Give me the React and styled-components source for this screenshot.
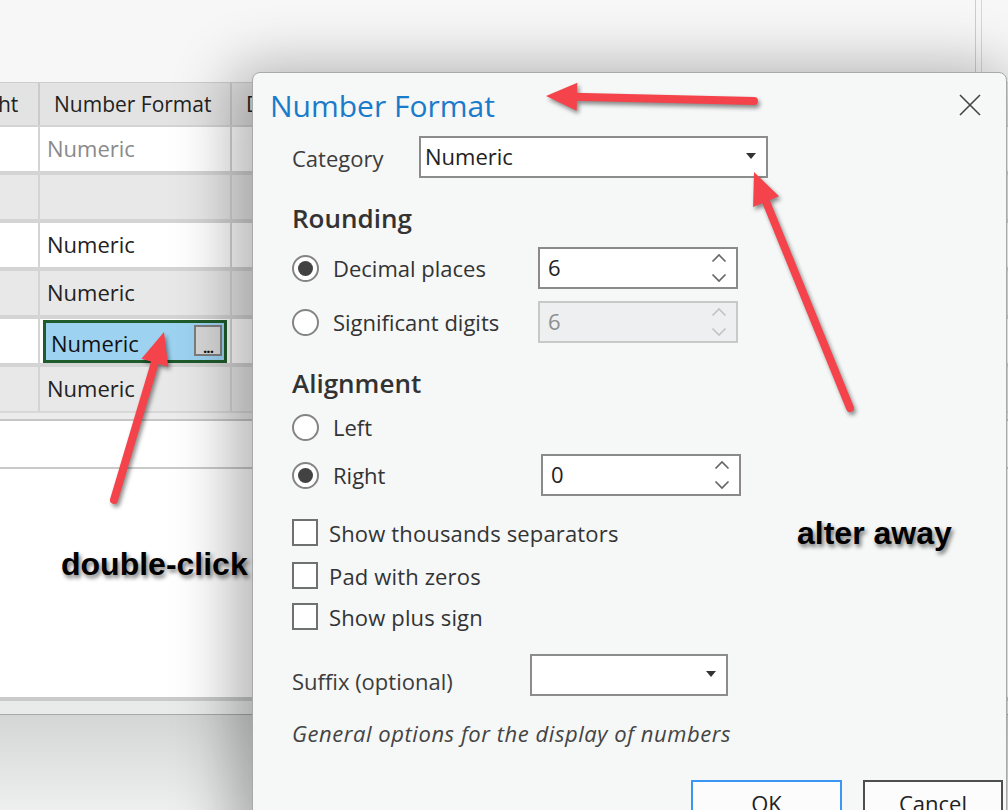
import React from "react";
import styled, { createGlobalStyle } from "styled-components";

const GlobalStyle = createGlobalStyle`
  html, body {
    margin: 0;
    padding: 0;
  }
  body {
    font-family: "Open Sans", "Noto Sans", sans-serif;
    background: #f7f7f7;
  }
`;

const Screen = styled.div`
  position: relative;
  width: 1008px;
  height: 810px;
  overflow: hidden;
  background: #f7f7f7;
  display: flex;
  flex-direction: column;
`;

/* ---------- background application ---------- */

const TopStrip = styled.div`
  flex: 0 0 82px;
  display: flex;
`;

const TopFill = styled.div`
  flex: 0 0 975px;
`;

const ScrollEdge = styled.div`
  width: 5px;
  border-left: 1px solid #cdcdcd;
  border-right: 1px solid #d6d6d6;
`;

const Table = styled.div`
  margin-left: -60px;
  background: #d4d4d4;
  display: flex;
  flex-direction: column;
`;

const HeaderRow = styled.div`
  display: grid;
  grid-template-columns: 98px 190px 1fr;
  column-gap: 2px;
  height: 43px;
  box-sizing: border-box;
  border-top: 1px solid #cdcdcd;
  background: #cbcbcb;
`;

const HeaderCell = styled.div`
  display: flex;
  align-items: center;
  padding-left: 14px;
  background: #e3e3e3;
  font-size: 21px;
  color: #222;
  white-space: nowrap;
  overflow: hidden;
`;

const TableBody = styled.div`
  display: flex;
  flex-direction: column;
  gap: 4px;
  padding-top: 2px;
`;

const Row = styled.div`
  display: grid;
  grid-template-columns: 98px 190px 1fr;
  column-gap: 2px;
  height: 44px;
`;

const Cell = styled.div`
  display: flex;
  align-items: center;
  padding: 0 0 3px 7px;
  background: ${(p) => (p.$alt ? "#e8e8e8" : "#ffffff")};
  font-size: 22px;
  color: ${(p) => (p.$muted ? "#8a8a8a" : "#222")};
  white-space: nowrap;
  overflow: hidden;
`;

const EditCell = styled.div`
  background: #ffffff;
  padding: 1px 3px 0 3px;
  display: flex;
`;

const Editor = styled.div`
  flex: 1;
  display: flex;
  align-items: flex-end;
  justify-content: space-between;
  border: 3px solid #1f5b2b;
  background: #9dd3f1;
  padding: 0 2px 2px 5px;
  font-size: 22px;
  line-height: 30px;
  color: #111;
`;

const EllipsisButton = styled.div`
  width: 28px;
  height: 31px;
  box-sizing: border-box;
  border: 2px solid #7e7e7e;
  background: #d8d8d8;
  display: flex;
  align-items: flex-end;
  justify-content: center;
  font-size: 15px;
  font-weight: 700;
  line-height: 14px;
  letter-spacing: -1px;
  color: #111;
  margin-bottom: 2px;
`;

const TableEnd = styled.div`
  height: 6px;
  background: #ececec;
  border-top: 2px solid #d8d8d8;
  border-bottom: 2px solid #c6c6c6;
`;

const WhitePanel = styled.div`
  flex: 0 0 ${(p) => p.$h}px;
  background: #ffffff;
  border-bottom: 2px solid #cacaca;
`;

const StatusBar = styled.div`
  flex: 0 0 13px;
  background: #e9eaea;
  border-top: 2px solid #c9c9c9;
  border-bottom: 1px solid #a8a8a8;
`;

const BottomShade = styled.div`
  flex: 1;
  background: linear-gradient(#d4d5d5, #eef0f0);
`;

/* ---------- dialog ---------- */

const Dialog = styled.div`
  position: absolute;
  left: 252px;
  top: 72px;
  width: 755px;
  height: 780px;
  box-sizing: border-box;
  background: #f6f7f7;
  border: 1px solid #a9a9a9;
  border-radius: 8px;
  box-shadow: -10px 6px 60px 10px rgba(0, 0, 0, 0.3);
  display: flex;
  flex-direction: column;
`;

const DialogHeader = styled.div`
  flex: 0 0 63px;
  box-sizing: border-box;
  padding: 13px 25px 0 17px;
  display: flex;
  justify-content: space-between;
  align-items: flex-start;
`;

const Title = styled.div`
  font-size: 30px;
  line-height: 40px;
  font-weight: 400;
  color: #1a7bca;
`;

const CloseButton = styled.div`
  margin-top: 8px;
  width: 22px;
  height: 22px;
  display: flex;
`;

const DialogBody = styled.div`
  padding-left: 39px;
  display: flex;
  flex-direction: column;
  color: #333;
  font-size: 22px;
`;

const FieldRow = styled.div`
  display: flex;
  align-items: center;
  height: 42px;
  margin-top: ${(p) => p.$mt || 0}px;
`;

const FieldLabel = styled.div`
  width: ${(p) => p.$w}px;
  flex: 0 0 auto;
  padding-top: ${(p) => p.$dy || 0}px;
  color: #3c3c3c;
  white-space: nowrap;
`;

const Select = styled.div`
  width: ${(p) => p.$w}px;
  height: 42px;
  box-sizing: border-box;
  border: 2px solid #8c8c8c;
  background: #ffffff;
  display: flex;
  align-items: center;
  justify-content: space-between;
  padding: 0 10px 3px 4px;
  color: #222;
`;

const SectionTitle = styled.div`
  margin-top: ${(p) => p.$mt}px;
  font-size: 26px;
  line-height: 32px;
  font-weight: 600;
  color: #333;
`;

const Option = styled.div`
  width: ${(p) => p.$w}px;
  flex: 0 0 auto;
  display: flex;
  align-items: center;
  gap: 14px;
`;

const Radio = styled.div`
  width: 27px;
  height: 27px;
  box-sizing: border-box;
  border-radius: 50%;
  border: 2px solid #848484;
  background: #ffffff;
  display: flex;
  align-items: center;
  justify-content: center;
  &::after {
    content: "";
    width: 15px;
    height: 15px;
    border-radius: 50%;
    background: ${(p) => (p.$checked ? "#424242" : "transparent")};
  }
`;

const Checkbox = styled.div`
  width: 26px;
  height: 27px;
  box-sizing: border-box;
  border: 2px solid #707070;
  background: #ffffff;
`;

const CheckRow = styled.div`
  display: flex;
  align-items: center;
  gap: 11px;
  height: 27px;
  margin-top: ${(p) => p.$mt}px;
  color: #333;
  letter-spacing: 0.15px;
`;

const SpinBox = styled.div`
  width: 200px;
  height: 42px;
  box-sizing: border-box;
  border: 2px solid ${(p) => (p.$disabled ? "#c8c8c8" : "#8a8a8a")};
  background: ${(p) => (p.$disabled ? "#eeeff0" : "#ffffff")};
  color: ${(p) => (p.$disabled ? "#8e8e8e" : "#222")};
  display: flex;
  align-items: center;
  justify-content: space-between;
  padding: 0 9px 3px 8px;
`;

const Chevrons = styled.div`
  display: flex;
  flex-direction: column;
  gap: 10px;
  padding-top: 3px;
  color: ${(p) => (p.$disabled ? "#c4c4c4" : "#666")};
`;

const Hint = styled.div`
  margin-top: 22px;
  font-style: italic;
  line-height: 30px;
  letter-spacing: 0.55px;
  color: #444;
`;

const ButtonRow = styled.div`
  margin-top: 32px;
  display: flex;
  justify-content: flex-end;
  gap: 21px;
  padding-right: 3px;
`;

const Button = styled.div`
  width: ${(p) => p.$w}px;
  height: 46px;
  box-sizing: border-box;
  border: 2px solid ${(p) => (p.$primary ? "#3a97f3" : "#4e4e4e")};
  background: #fcfcfc;
  display: flex;
  align-items: center;
  justify-content: center;
  color: #222;
`;

/* ---------- annotations ---------- */

const Overlay = styled.svg`
  position: absolute;
  left: 0;
  top: 0;
  pointer-events: none;
`;

const ShadowGroup = styled.g`
  filter: drop-shadow(2px 3px 2px rgba(0, 0, 0, 0.45));
`;

const Note = styled.div`
  position: absolute;
  left: ${(p) => p.$x}px;
  top: ${(p) => p.$y}px;
  font-family: "Liberation Sans", Arial, sans-serif;
  font-weight: 700;
  font-size: 32px;
  line-height: 32px;
  color: #000;
  white-space: nowrap;
  text-shadow: 2px 3px 4px rgba(0, 0, 0, 0.55);
`;

const Chevron = ({ up }) => (
  <svg width="16" height="10" viewBox="0 0 16 10">
    <polyline
      points={up ? "1.5,8.5 8,2 14.5,8.5" : "1.5,1.5 8,8 14.5,1.5"}
      fill="none"
      stroke="currentColor"
      strokeWidth="1.7"
    />
  </svg>
);

const Caret = () => (
  <svg width="10" height="6" viewBox="0 0 10 6">
    <polygon points="0,0 10,0 5,6" fill="#333" />
  </svg>
);

const Spin = ({ value, disabled }) => (
  <SpinBox $disabled={disabled}>
    <span>{value}</span>
    <Chevrons $disabled={disabled}>
      <Chevron up />
      <Chevron />
    </Chevrons>
  </SpinBox>
);

const Arrow = ({ tail, tip, head = 32, half = 14 }) => {
  const dx = tip[0] - tail[0];
  const dy = tip[1] - tail[1];
  const len = Math.hypot(dx, dy);
  const ux = dx / len;
  const uy = dy / len;
  const bx = tip[0] - ux * head;
  const by = tip[1] - uy * head;
  const px = -uy * half;
  const py = ux * half;
  return (
    <g>
      <line
        x1={tail[0]}
        y1={tail[1]}
        x2={bx + ux * 4}
        y2={by + uy * 4}
        stroke="#f4434b"
        strokeWidth="8"
        strokeLinecap="round"
      />
      <polygon
        points={`${tip[0]},${tip[1]} ${bx + px},${by + py} ${bx - px},${by - py}`}
        fill="#f4434b"
      />
    </g>
  );
};

const rows = [
  { alt: false, text: "Numeric", muted: true },
  { alt: true, text: "" },
  { alt: false, text: "Numeric" },
  { alt: true, text: "Numeric" },
  { alt: false, text: "Numeric", editing: true },
  { alt: true, text: "Numeric" },
];

export default function App() {
  return (
    <>
      <GlobalStyle />
      <Screen>
        <TopStrip>
          <TopFill />
          <ScrollEdge />
        </TopStrip>

        <Table>
          <HeaderRow>
            <HeaderCell>Height</HeaderCell>
            <HeaderCell>Number Format</HeaderCell>
            <HeaderCell>D</HeaderCell>
          </HeaderRow>
          <TableBody>
            {rows.map((r, i) => (
              <Row key={i}>
                <Cell $alt={r.alt} />
                {r.editing ? (
                  <EditCell>
                    <Editor>
                      <span>{r.text}</span>
                      <EllipsisButton>...</EllipsisButton>
                    </Editor>
                  </EditCell>
                ) : (
                  <Cell $alt={r.alt} $muted={r.muted}>
                    {r.text}
                  </Cell>
                )}
                <Cell $alt={r.alt} />
              </Row>
            ))}
          </TableBody>
        </Table>
        <TableEnd />
        <WhitePanel $h={46} />
        <WhitePanel $h={228} />
        <StatusBar />
        <BottomShade />

        <Dialog>
          <DialogHeader>
            <Title>Number Format</Title>
            <CloseButton>
              <svg width="22" height="22" viewBox="0 0 22 22">
                <path d="M1 1 L21 21 M21 1 L1 21" stroke="#444" strokeWidth="1.6" />
              </svg>
            </CloseButton>
          </DialogHeader>
          <DialogBody>
            <FieldRow>
              <FieldLabel $w={127} $dy={2}>Category</FieldLabel>
              <Select $w={349}>
                <span>Numeric</span>
                <Caret />
              </Select>
            </FieldRow>

            <SectionTitle $mt={24}>Rounding</SectionTitle>
            <FieldRow $mt={13}>
              <Option $w={246}>
                <Radio $checked />
                <span>Decimal places</span>
              </Option>
              <Spin value="6" />
            </FieldRow>
            <FieldRow $mt={12}>
              <Option $w={246}>
                <Radio />
                <span>Significant digits</span>
              </Option>
              <Spin value="6" disabled />
            </FieldRow>

            <SectionTitle $mt={24}>Alignment</SectionTitle>
            <FieldRow $mt={7}>
              <Option $w={246}>
                <Radio />
                <span>Left</span>
              </Option>
            </FieldRow>
            <FieldRow $mt={6}>
              <Option $w={249}>
                <Radio $checked />
                <span>Right</span>
              </Option>
              <Spin value="0" />
            </FieldRow>

            <CheckRow $mt={23}>
              <Checkbox />
              <span>Show thousands separators</span>
            </CheckRow>
            <CheckRow $mt={16}>
              <Checkbox />
              <span>Pad with zeros</span>
            </CheckRow>
            <CheckRow $mt={14}>
              <Checkbox />
              <span>Show plus sign</span>
            </CheckRow>

            <FieldRow $mt={24}>
              <FieldLabel $w={238} $dy={12}>
                Suffix (optional)
              </FieldLabel>
              <Select $w={198}>
                <span />
                <Caret />
              </Select>
            </FieldRow>

            <Hint>General options for the display of numbers</Hint>

            <ButtonRow>
              <Button $w={151} $primary>
                OK
              </Button>
              <Button $w={140}>Cancel</Button>
            </ButtonRow>
          </DialogBody>
        </Dialog>

        <Overlay width="1008" height="810" viewBox="0 0 1008 810">
          <ShadowGroup>
            <Arrow tail={[754, 101]} tip={[546, 96]} head={31} />
            <Arrow tail={[850, 408]} tip={[754, 172]} />
            <Arrow tail={[114, 500]} tip={[164, 332]} />
          </ShadowGroup>
        </Overlay>
        <Note $x={61} $y={548}>double-click</Note>
        <Note $x={797} $y={517}>alter away</Note>
      </Screen>
    </>
  );
}
